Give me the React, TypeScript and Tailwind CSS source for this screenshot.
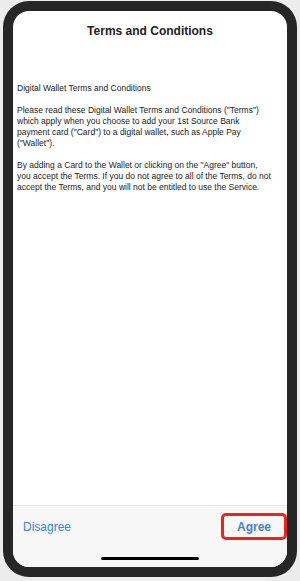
import React from "react";

const Body = () => (
  <div className="px-[4px] pt-[32px] text-[8.5px] leading-[11px] text-[#1c1c1c]">
    <p>Digital Wallet Terms and Conditions</p>
    <p className="mt-[11px]">
      Please read these Digital Wallet Terms and Conditions ("Terms")
      <br />
      which apply when you choose to add your 1st Source Bank
      <br />
      payment card ("Card") to a digital wallet, such as Apple Pay
      <br />
      ("Wallet").
    </p>
    <p className="mt-[11px]">
      By adding a Card to the Wallet or clicking on the "Agree" button,
      <br />
      you accept the Terms. If you do not agree to all of the Terms, do not
      <br />
      accept the Terms, and you will not be entitled to use the Service.
    </p>
  </div>
);

const App = () => {
  return (
    <div
      className="w-[300px] h-[581px] bg-[#ececec] pt-[1px] px-[3px] pb-[4px]"
      style={{ fontFamily: '"Liberation Sans", Arial, sans-serif' }}
    >
      <div className="h-full rounded-[26px] bg-[#262626] p-[10px]">
        <div className="h-full rounded-[16px] bg-white overflow-hidden flex flex-col">
          <div className="flex-1">
            <div className="h-[40px] flex items-center justify-center text-[12px] font-bold text-[#222]">
              Terms and Conditions
            </div>
            <Body />
          </div>
          <div className="h-[62px] bg-[#f8f7f8] border-t border-[#e6e6e6] flex flex-col">
            <div className="flex items-center justify-between pl-[10px] pr-0 pt-[7px]">
              <span className="text-[12px] text-[#3b86d6]">Disagree</span>
              <span className="w-[66px] h-[27px] rounded-[5px] border-[3px] border-[#e8261c] flex items-center justify-center text-[12px] font-bold text-[#3b86d6]">
                Agree
              </span>
            </div>
            <div className="mt-auto mb-[7px] mx-auto w-[98px] h-[3px] rounded-full bg-black" />
          </div>
        </div>
      </div>
    </div>
  );
};

export default App;
